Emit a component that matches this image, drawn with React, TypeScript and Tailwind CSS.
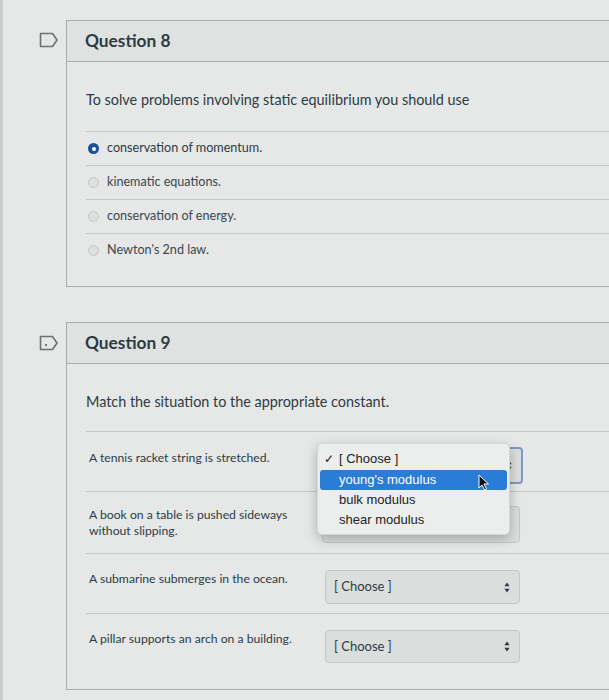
import React from 'react';

const answers = [
    { text: 'conservation of momentum.', checked: true },
    { text: 'kinematic equations.', checked: false },
    { text: 'conservation of energy.', checked: false },
    { text: "Newton's 2nd law.", checked: false },
];

function Flag({ dot }: { dot?: boolean }) {
    return (
        <svg width="20" height="16" viewBox="0 0 20 16" className="block">
            <path d="M1.5 1.5 H13.5 L18 8 L13.5 14.5 H1.5 Z" fill="none" stroke="#6b7175" strokeWidth="1.6" strokeLinejoin="round" />
            {dot && <circle cx="7" cy="10" r="1" fill="#4a5055" />}
        </svg>
    );
}

function Arrows() {
    return (
        <svg width="6" height="11" viewBox="0 0 6 11" className="block">
            <path d="M3 0.5 L5.6 4.2 H0.4 Z" fill="#2d3b45" />
            <path d="M3 10.5 L5.6 6.8 H0.4 Z" fill="#2d3b45" />
        </svg>
    );
}

function Select({ focused, className }: { focused?: boolean; className?: string }) {
    return (
        <div
            className={
                'flex items-center justify-between rounded-[4px] bg-[#dadedd] pl-2 pr-[9px] text-[13px] text-[#2d3b45] ' +
                (focused ? 'border-2 border-[#7f97c9] ' : 'border border-[#c4c8c7] ') +
                (className || '')
            }
        >
            <span>[ Choose ]</span>
            <Arrows />
        </div>
    );
}

function Cursor() {
    return (
        <svg width="12" height="17" viewBox="0 0 12 17" className="block">
            <path d="M1 1 L1 14 L4 11 L6.5 16 L8.5 15 L6 10 L10.5 10 Z" fill="#111" stroke="#fff" strokeWidth="1" strokeLinejoin="round" />
        </svg>
    );
}

export default function App() {
    return (
        <div
            className="relative h-[700px] w-[609px] overflow-hidden border-l-[3px] border-[#c9cccb] bg-[#e5e8e7] pt-5 text-[#2d3b45]"
            style={{ fontFamily: 'Lato, "Open Sans", sans-serif' }}
        >
            {/* Question 8 */}
            <div className="flex">
                <div className="w-[63px] shrink-0 pl-[36px] pt-[12px]">
                    <Flag />
                </div>
                <div className="-mr-4 flex-1 border-y border-l border-[#a9adac]">
                    <div className="flex h-[41px] items-center border-b border-[#a9adac] bg-[#dfe2e1] pl-[18px] text-[17.3px] font-bold text-[#2d3b45]">
                        Question 8
                    </div>
                    <div className="pl-[19px] pt-[28px] pb-[19px]">
                        <p className="text-[14.4px] leading-5">To solve problems involving static equilibrium you should use</p>
                        <div className="mt-[21px]">
                            {answers.map((a) => (
                                <div key={a.text} className="flex h-[34px] items-center border-t border-[#c3c7c6] pl-[2px] text-[12.6px]">
                                    {a.checked ? (
                                        <span className="flex h-[11px] w-[11px] items-center justify-center rounded-full bg-[#1c4f9c]">
                                            <span className="h-[4px] w-[4px] rounded-full bg-white" />
                                        </span>
                                    ) : (
                                        <span className="h-[11px] w-[11px] rounded-full border border-[#c3c7c6] bg-[#dde0df]" />
                                    )}
                                    <span className={'ml-[8px] ' + (a.checked ? 'text-[#2d3b45]' : 'text-[#3a4750]')}>{a.text}</span>
                                </div>
                            ))}
                        </div>
                    </div>
                </div>
            </div>

            {/* Question 9 */}
            <div className="mt-[35px] flex">
                <div className="w-[63px] shrink-0 pl-[36px] pt-[13px]">
                    <Flag dot />
                </div>
                <div className="-mr-4 flex-1 border-y border-l border-[#a9adac]">
                    <div className="flex h-[41px] items-center border-b border-[#a9adac] bg-[#dfe2e1] pl-[18px] text-[17.3px] font-bold text-[#2d3b45]">
                        Question 9
                    </div>
                    <div className="pl-[19px] pt-[28px] pb-[16px]">
                        <p className="text-[14.4px] leading-5">Match the situation to the appropriate constant.</p>
                        <div className="mt-[19px] text-[12.2px]">
                            {/* row 1 */}
                            <div className="relative flex h-[60px] border-t border-[#c3c7c6]">
                                <div className="w-[236px] pl-[3px] pt-[17px]">A tennis racket string is stretched.</div>
                                <Select focused className="mt-[15px] h-[37px] w-[201px]" />
                                <div className="absolute left-[231px] top-[11px] z-10 w-[193px] rounded-[5px] border border-[#d4d7d6] bg-[#eceeed] py-[4px] text-[13px] text-[#222] shadow-[0_4px_12px_rgba(0,0,0,0.25)]" style={{ fontFamily: '"Liberation Sans", Arial, sans-serif' }}>
                                    <div className="flex h-[22px] items-center pl-[6px]">
                                        <span className="w-[15px] text-[12px]">✓</span>
                                        <span>[ Choose ]</span>
                                    </div>
                                    <div className="relative mx-[2px] flex h-[20px] items-center rounded-[3px] bg-[#2b7cd6] pl-[19px] text-white">
                                        young's modulus
                                        <div className="absolute left-[158px] top-[4px]">
                                            <Cursor />
                                        </div>
                                    </div>
                                    <div className="flex h-[20px] items-center pl-[21px]">bulk modulus</div>
                                    <div className="flex h-[20px] items-center pl-[21px]">shear modulus</div>
                                </div>
                            </div>
                            {/* row 2 */}
                            <div className="flex h-[62px] border-t border-[#c3c7c6]">
                                <div className="w-[236px] pl-[3px] pt-[15px] leading-4">
                                    A book on a table is pushed sideways
                                    <br />
                                    without slipping.
                                </div>
                                <Select className="mt-[14px] h-[37px] w-[198px]" />
                            </div>
                            {/* row 3 */}
                            <div className="flex h-[60px] border-t border-[#c3c7c6]">
                                <div className="w-[239px] pl-[3px] pt-[16px]">A submarine submerges in the ocean.</div>
                                <Select className="mt-[16px] h-[34px] w-[195px]" />
                            </div>
                            {/* row 4 */}
                            <div className="flex h-[60px] border-t border-[#c3c7c6]">
                                <div className="w-[239px] pl-[3px] pt-[16px]">A pillar supports an arch on a building.</div>
                                <Select className="mt-[16px] h-[33px] w-[195px]" />
                            </div>
                        </div>
                    </div>
                </div>
            </div>
        </div>
    );
}
